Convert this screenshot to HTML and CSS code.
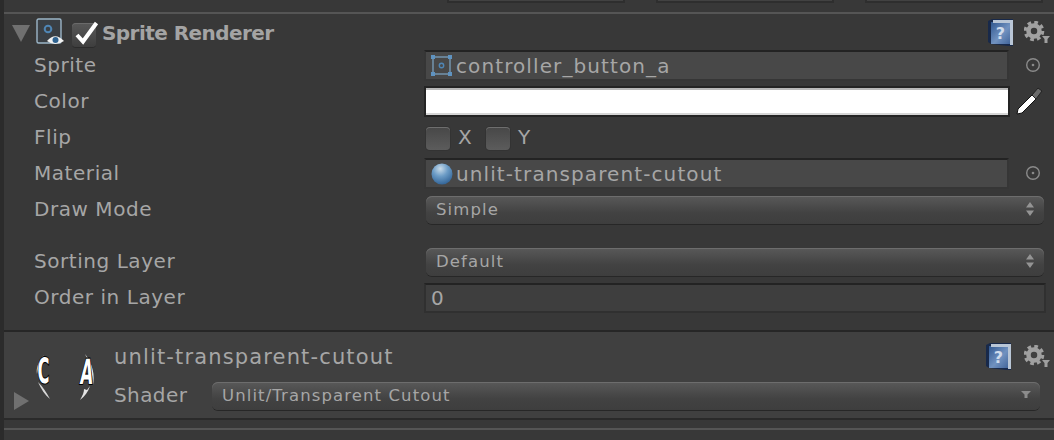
FILE: index.html
```html
<!DOCTYPE html>
<html lang="en">
<head>
<meta charset="utf-8">
<title>Sprite Renderer Inspector</title>
<link rel="stylesheet" href="styles.css">
</head>
<body>
<svg class="defs" width="0" height="0" aria-hidden="true">
  <defs>
    <linearGradient id="book" x1="0" y1="0" x2="1" y2="1">
      <stop offset="0" stop-color="#30578f"/>
      <stop offset="0.55" stop-color="#7192c0"/>
      <stop offset="1" stop-color="#3f6298"/>
    </linearGradient>
    <radialGradient id="ball" cx="0.42" cy="0.25" r="0.8">
      <stop offset="0" stop-color="#c9dbe8"/>
      <stop offset="0.45" stop-color="#6c9cc6"/>
      <stop offset="1" stop-color="#2d5f93"/>
    </radialGradient>
    <symbol id="help" viewBox="0 0 26 28">
      <path d="M0 2 L4 0 H25 V27 L20 27 L3 25 L0 23Z" fill="#18294a"/>
      <path d="M3 3 H23 V25 H3Z" fill="url(#book)"/>
      <path d="M5 1 H25 V26 H22 V4 H5Z" fill="#b9c6d6"/>
      <text x="12.500" y="20" class="help-mark">?</text>
    </symbol>
    <symbol id="gear" viewBox="0 0 26 24">
      <g fill="none" stroke="#a0a0a0">
        <circle cx="10" cy="10" r="5.500" stroke-width="4.500"/>
        <circle cx="10" cy="10" r="8.500" stroke-width="3.600" stroke-dasharray="3.600 3.075"/>
      </g>
      <path d="M18 15 H26 L23.500 18 V22 H20.500 V18Z" fill="#a0a0a0"/>
    </symbol>
    <symbol id="target" viewBox="0 0 16 16">
      <circle cx="8" cy="8" r="6.300" fill="none" stroke="#8a8a8a" stroke-width="1.400"/>
      <circle cx="8" cy="8" r="1.300" fill="#8a8a8a"/>
    </symbol>
  </defs>
</svg>

<main class="inspector">
  <div class="top-strip">
    <span class="stub"></span><span class="stub"></span><span class="stub"></span>
  </div>

  <section class="component">
    <header class="comp-head">
      <span class="tri-down"></span>
      <svg class="sprite-icon" width="30" height="30" viewBox="0 0 30 30" aria-hidden="true">
        <rect x="2" y="1" width="24" height="24" rx="1.500" fill="#3a3f44" stroke="#9cb6c8" stroke-width="1.400"/>
        <circle cx="13" cy="11" r="3.300" fill="none" stroke="#4f86b5" stroke-width="2"/>
        <path d="M12 23 Q20 13.500 29 23 Q20 29 12 23Z" fill="#f2f2f2"/>
        <circle cx="20.500" cy="22" r="3" fill="#2f6390"/>
      </svg>
      <span class="check checked">
        <svg width="28" height="28" viewBox="0 0 28 28" aria-hidden="true">
          <path d="M5 15 L11 21.500 L24.500 3" fill="none" stroke="#fff" stroke-width="4"/>
        </svg>
      </span>
      <h2 class="comp-title">Sprite Renderer</h2>
      <svg class="help" aria-hidden="true"><use href="#help"/></svg>
      <svg class="gear" aria-hidden="true"><use href="#gear"/></svg>
    </header>

    <div class="row">
      <label class="prop">Sprite</label>
      <div class="value">
        <div class="objfield">
          <svg class="obj-icon" width="24" height="24" viewBox="0 0 24 24" aria-hidden="true">
            <rect x="3" y="3" width="17" height="17" fill="none" stroke="#7fa8c8" stroke-width="1.200"/>
            <g fill="#5f93c0"><rect x="1" y="1" width="4" height="4"/><rect x="18" y="1" width="4" height="4"/><rect x="1" y="18" width="4" height="4"/><rect x="18" y="18" width="4" height="4"/></g>
            <circle cx="11.500" cy="11.500" r="2.200" fill="none" stroke="#4f86b5" stroke-width="1.400"/>
          </svg>
          <span class="objname">controller_button_a</span>
        </div>
        <svg class="target" aria-hidden="true"><use href="#target"/></svg>
      </div>
    </div>

    <div class="row">
      <label class="prop">Color</label>
      <div class="value">
        <div class="colorfield"></div>
        <svg class="picker" width="28" height="28" viewBox="0 0 28 28" aria-hidden="true">
          <path d="M2 27 L3 22 L17 8 L21 12 L7 26Z" fill="#fff" stroke="#111" stroke-width="1"/>
          <path d="M17 8 L23 1 L27 4 L21 12Z" fill="#6b6b6b" stroke="#222" stroke-width="1"/>
        </svg>
      </div>
    </div>

    <div class="row">
      <label class="prop">Flip</label>
      <div class="value">
        <span class="check small"></span><span class="flip-label">X</span>
        <span class="check small"></span><span class="flip-label">Y</span>
      </div>
    </div>

    <div class="row">
      <label class="prop">Material</label>
      <div class="value">
        <div class="objfield">
          <svg class="obj-icon" width="24" height="24" viewBox="0 0 24 24" aria-hidden="true">
            <circle cx="12" cy="12" r="10.500" fill="url(#ball)"/>
          </svg>
          <span class="objname">unlit-transparent-cutout</span>
        </div>
        <svg class="target" aria-hidden="true"><use href="#target"/></svg>
      </div>
    </div>

    <div class="row">
      <label class="prop">Draw Mode</label>
      <div class="value">
        <div class="popup">
          <span>Simple</span>
          <svg class="updown" width="10" height="16" viewBox="0 0 10 16" aria-hidden="true"><path d="M5 1 L9 6.500 H1Z M1 9.500 H9 L5 15Z" fill="#949494"/></svg>
        </div>
      </div>
    </div>

    <div class="row-gap"></div>

    <div class="row">
      <label class="prop">Sorting Layer</label>
      <div class="value">
        <div class="popup">
          <span>Default</span>
          <svg class="updown" width="10" height="16" viewBox="0 0 10 16" aria-hidden="true"><path d="M5 1 L9 6.500 H1Z M1 9.500 H9 L5 15Z" fill="#949494"/></svg>
        </div>
      </div>
    </div>

    <div class="row">
      <label class="prop">Order in Layer</label>
      <div class="value">
        <div class="numfield">0</div>
      </div>
    </div>
  </section>

  <section class="material">
    <div class="mat-side">
      <span class="tri-right"></span>
      <svg class="preview" width="68" height="62" viewBox="0 -12 68 62" aria-hidden="true">
        <path d="M9 1 C3 8 1 14 2 20 C3 14 5 8 9 1Z M3 28 C6 35 10 41 15 45 C11 38 8 33 3 28Z" fill="#d8d8d8"/>
        <text class="art" transform="translate(2.500 29) scale(.68 1.450)">C</text>
        <path d="M50 0 C58 10 60 22 58 31 C58 20 55 10 50 0Z M55 32 C53 38 50 42 45 46 C48 41 49 38 49 35 L52 36Z" fill="#e4e4e4"/>
        <text class="art" transform="translate(44.500 30) skewX(-5) scale(.68 1.450)">A</text>
      </svg>
    </div>
    <div class="mat-main">
      <div class="mat-head">
        <h3 class="mat-title">unlit-transparent-cutout</h3>
        <svg class="help" aria-hidden="true"><use href="#help"/></svg>
        <svg class="gear" aria-hidden="true"><use href="#gear"/></svg>
      </div>
      <div class="mat-shader">
        <label class="shader-label">Shader</label>
        <div class="popup shader-popup">
          <span>Unlit/Transparent Cutout</span>
          <svg width="10" height="8" viewBox="0 0 10 8" aria-hidden="true"><path d="M0 0 H10 L6.500 3.500 V7 H3.500 V3.500Z" fill="#8c8c8c"/></svg>
        </div>
      </div>
    </div>
  </section>
  <div class="bottom-line"></div>
</main>
</body>
</html>
```

FILE: styles.css
```css
* { box-sizing: border-box; }
html, body { margin: 0; padding: 0; height: 100%; background: #383838; }
body { overflow: hidden; font-family: "DejaVu Sans", "Liberation Sans", sans-serif; color: #a6a6a6; }
.defs { display: block; height: 0; }
.help-mark { font: bold 16px "DejaVu Sans", sans-serif; fill: #d0dcec; text-anchor: middle; }
.art { font: bold 24px "DejaVu Sans", sans-serif; fill: #fff; stroke: #000; stroke-width: 1.500px; paint-order: stroke; }

.inspector { width: 1054px; height: 440px; border-left: 4px solid #2b2b2b; display: flex; flex-direction: column; }

.top-strip { height: 14px; flex: none; padding-left: 443px; display: flex; align-items: flex-start; gap: 31px; border-bottom: 2px solid #555; }
.stub { width: 178px; height: 3px; background: #424242; border: 2px solid #2e2e2e; border-top: 0; }

.component { height: 318px; flex: none; border-bottom: 2px solid #262626; }

.comp-head { height: 33px; display: flex; align-items: center; padding: 5px 4px 0 8px; }
.tri-down { width: 0; height: 0; border-left: 9px solid transparent; border-right: 9px solid transparent; border-top: 17px solid #707070; margin-right: 5px; flex: none; }
.sprite-icon { margin-right: 7px; flex: none; }
.check { display: block; flex: none; background: linear-gradient(#585858, #3e3e3e); border-radius: 4px; box-shadow: inset 0 1px 0 #6a6a6a, 0 1px 0 #2b2b2b; }
.checked { width: 24px; height: 24px; margin: 3px 6px 0 0; position: relative; }
.checked svg { position: absolute; left: 0; top: -3px; }
.comp-title { margin: 0; flex: 1; font-size: 20px; font-weight: bold; letter-spacing: -0.550px; color: #a4a4a4; }
.help { width: 26px; height: 28px; flex: none; }
.gear { width: 26px; height: 24px; flex: none; margin-left: 10px; }

.row { height: 36px; display: flex; align-items: center; padding-left: 30px; }
.row-gap { height: 16px; }
.prop { width: 390px; flex: none; font-size: 20px; color: #a6a6a6; letter-spacing: 0.550px; }
.value { flex: 1; display: flex; align-items: center; min-width: 0; }

.objfield { width: 585px; height: 31px; margin-top: 1px; flex: none; display: flex; align-items: center; gap: 2px; padding-left: 4px; background: #484848; border: 2px solid #363636; border-top-color: #232323; }
.obj-icon { flex: none; }
.objname { font-size: 20px; color: #a6a6a6; letter-spacing: 1.100px; white-space: nowrap; }
.target { width: 16px; height: 16px; margin-left: 16px; flex: none; }

.colorfield { width: 586px; height: 31px; margin-top: 1px; flex: none; background: #fff; border: 2px solid #242424; box-shadow: inset 0 2px 0 #b9b9b9, inset 0 -2px 0 #d6d6d6; }
.picker { margin-left: 5px; flex: none; }

.check.small { width: 24px; height: 23px; margin: 3px 8px 0 2px; box-shadow: inset 0 1px 0 #6e6e6e, 0 0 0 1px #333; background: linear-gradient(#474747, #5c5c5c); }
.flip-label { font-size: 20px; color: #a6a6a6; width: 26px; }

.popup { height: 28px; width: 618px; margin: 2px 0 0 2px; flex: none; display: flex; align-items: center; justify-content: space-between; padding: 0 9px 2px 10px; font-size: 16.500px; letter-spacing: 1.100px; color: #a6a6a6; border-radius: 6px; background: linear-gradient(#595959, #424242 60%, #3e3e3e); box-shadow: 0 1px 0 #272727, inset 0 1px 0 #6d6d6d; }

.numfield { width: 622px; height: 30px; margin-top: 2px; flex: none; padding-left: 5px; font-size: 20px; line-height: 26px; color: #a6a6a6; background: #3e3e3e; border: 2px solid #303030; border-top-color: #232323; }

.material { height: 88px; flex: none; display: flex; background: #404040; border-bottom: 2px solid #2a2a2a; }
.mat-side { width: 106px; flex: none; position: relative; }
.tri-right { position: absolute; left: 10px; bottom: 8px; width: 0; height: 0; border-top: 9px solid transparent; border-bottom: 9px solid transparent; border-left: 15px solid #707070; }
.preview { position: absolute; left: 31px; top: 10px; }
.mat-main { flex: 1; display: flex; flex-direction: column; padding: 11px 4px 0 4px; min-width: 0; }
.mat-head { display: flex; align-items: center; height: 28px; }
.mat-title { margin: 0; flex: 1; font-size: 21px; font-weight: normal; letter-spacing: 1.150px; color: #a6a6a6; white-space: nowrap; }
.mat-head .gear { margin-left: 12px; }
.mat-shader { display: flex; align-items: center; height: 34px; margin-top: 7px; }
.shader-label { width: 98px; flex: none; font-size: 20px; letter-spacing: 0.400px; color: #a6a6a6; }
.shader-popup { width: 828px; margin-left: 0; }

.bottom-line { height: 2px; margin-top: 8px; flex: none; background: #555; }
```
